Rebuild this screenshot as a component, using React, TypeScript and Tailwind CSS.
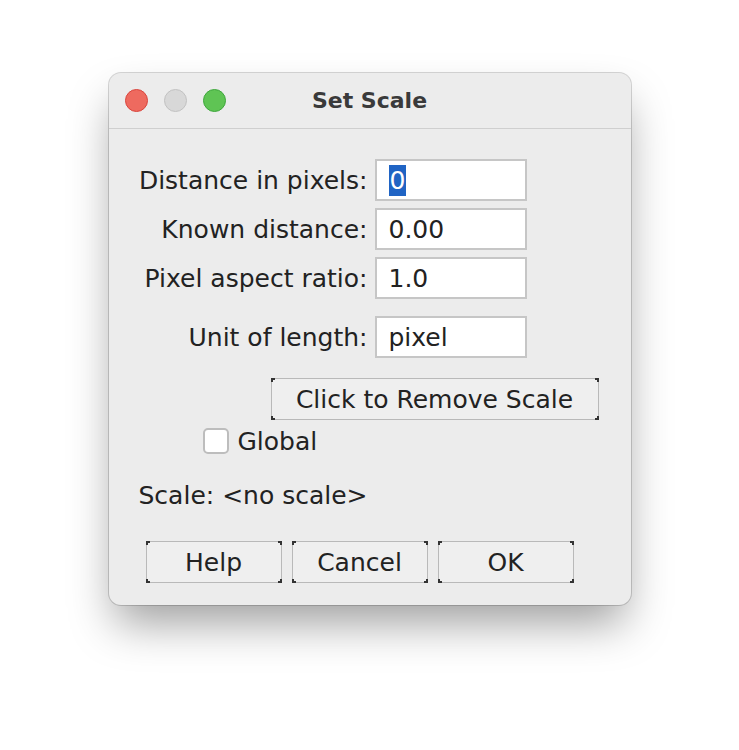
import { useState } from 'react'

const font = "font-['DejaVu_Sans','Noto_Sans',sans-serif]"

function Corners() {
  // tiny dark corner ticks drawn by Java's Aqua button border
  return (
    <>
      <span className="absolute -left-px -top-px h-[4px] w-[4px] border-l-2 border-t-2 border-[#333]" />
      <span className="absolute -right-px -top-px h-[4px] w-[4px] border-r-2 border-t-2 border-[#333]" />
      <span className="absolute -bottom-px -left-px h-[4px] w-[4px] border-b-2 border-l-2 border-[#333]" />
      <span className="absolute -bottom-px -right-px h-[4px] w-[4px] border-b-2 border-r-2 border-[#333]" />
    </>
  )
}

function JButton({ label, className }: { label: string; className?: string }) {
  return (
    <button
      className={`relative flex h-[42px] items-center justify-center border border-[#b9b9b9] bg-[#efefef] text-[25px] leading-none text-[#222] ${className ?? ''}`}
    >
      <Corners />
      {label}
    </button>
  )
}

function Field({ label, value, selected }: { label: string; value: string; selected?: boolean }) {
  return (
    <>
      <label className="self-center text-right text-[25px] leading-none text-[#222]">{label}</label>
      <div className="flex h-[42px] items-center border-2 border-[#c6c6c6] bg-white pl-[12px] text-[25px] leading-none text-[#222]">
        {selected ? (
          <span className="flex h-[31px] items-center bg-[#2064c4] px-[1px] text-white">{value}</span>
        ) : (
          value
        )}
      </div>
    </>
  )
}

export default function App() {
  const [global, setGlobal] = useState(false)

  return (
    <div className={`flex h-[750px] w-[739px] justify-center bg-white pt-[73px] ${font}`}>
      <div className="flex h-[532px] w-[522px] flex-col overflow-hidden rounded-[12px] bg-[#ececec] shadow-[0_24px_45px_-6px_rgba(0,0,0,0.38),0_0_0_1px_rgba(0,0,0,0.16)]">
        {/* title bar */}
        <div className="relative flex h-[56px] shrink-0 items-center border-b border-[#cfcfcf] pl-[16px]">
          <div className="flex gap-[16px]">
            <span className="h-[23px] w-[23px] rounded-full border border-[#d9453d] bg-[#ee6a5f]" />
            <span className="h-[23px] w-[23px] rounded-full border border-[#c2c2c2] bg-[#d8d8d8]" />
            <span className="h-[23px] w-[23px] rounded-full border border-[#3ea73c] bg-[#5fc454]" />
          </div>
          <div className="absolute inset-0 flex items-center justify-center text-[22px] font-bold text-[#3a3a3a]">
            Set Scale
          </div>
        </div>

        {/* fields */}
        <div className="mt-[30px] grid grid-cols-[259px_152px] gap-x-[7px] gap-y-[7px]">
          <Field label="Distance in pixels:" value="0" selected />
          <Field label="Known distance:" value="0.00" />
          <Field label="Pixel aspect ratio:" value="1.0" />
          <div className="col-span-2 h-[3px]" />
          <Field label="Unit of length:" value="pixel" />
        </div>

        <div className="mt-[20px] pl-[162px]">
          <JButton label="Click to Remove Scale" className="w-[328px]" />
        </div>

        <label className="mt-[8px] flex items-center gap-[9px] pl-[94px]">
          <span
            onClick={() => setGlobal(!global)}
            className="h-[26px] w-[26px] rounded-[5px] border-2 border-[#bdbdbd] bg-white"
          />
          <span className="text-[25px] leading-none text-[#222]">Global</span>
        </label>

        <div className="mt-[29px] pl-[30px] text-[25px] leading-none text-[#222]">Scale: &lt;no scale&gt;</div>

        <div className="mt-[33px] flex gap-[10px] pl-[37px]">
          <JButton label="Help" className="w-[136px]" />
          <JButton label="Cancel" className="w-[136px]" />
          <JButton label="OK" className="w-[136px]" />
        </div>
      </div>
    </div>
  )
}
